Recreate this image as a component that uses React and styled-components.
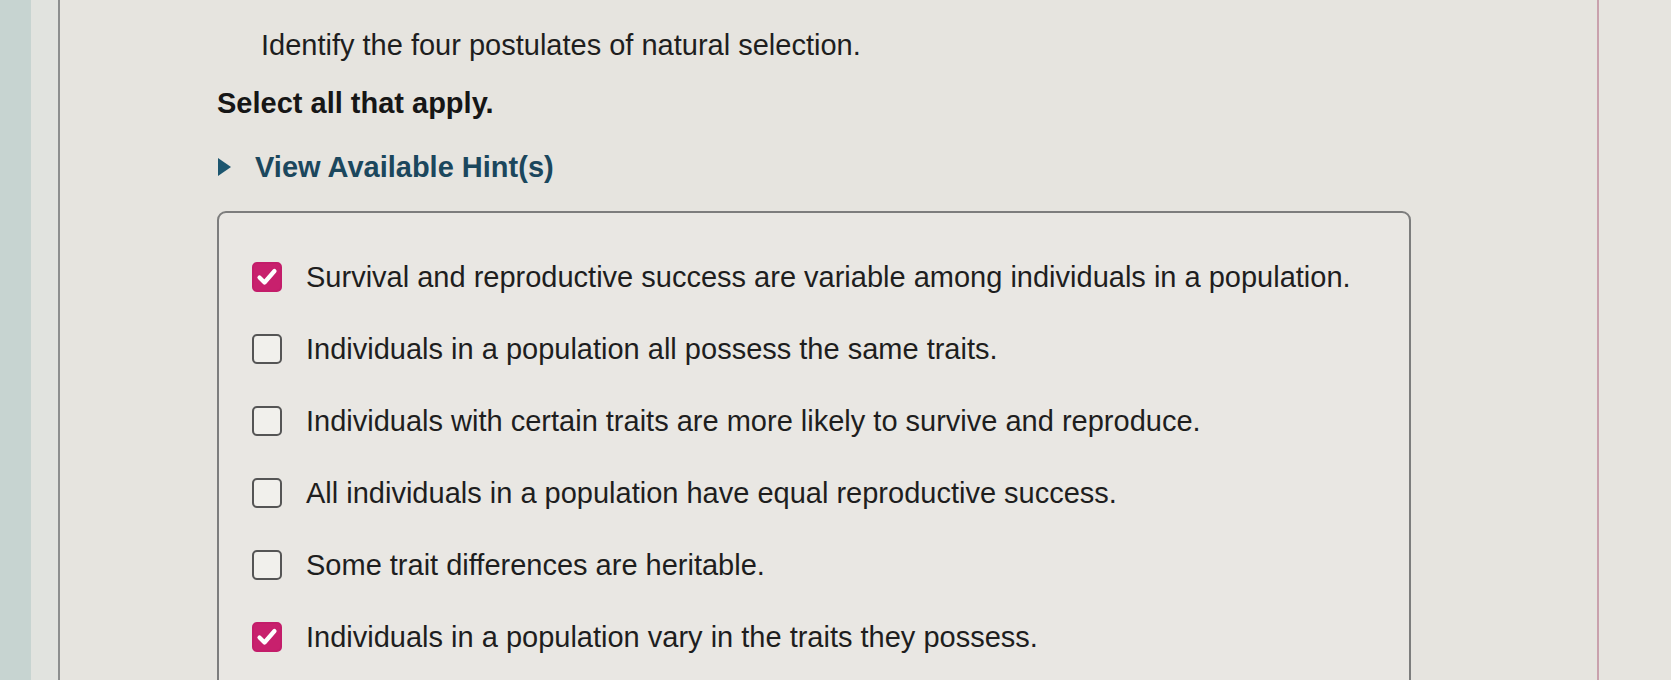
import React from 'react';
import styled, { createGlobalStyle } from 'styled-components';

const GlobalStyle = createGlobalStyle`
    html, body { margin: 0; padding: 0; }
    body {
        font-family: "Liberation Sans", Arial, sans-serif;
        background: #e6e4df;
        color: #1e1e1e;
    }
`

const Page = styled.div`
    display: flex;
    height: 680px;
    overflow: hidden;
    background: #e6e4df;
`

const Rail = styled.div`
    width: 31px;
    flex: none;
    background: #c7d4d1;
`

const Gutter = styled.div`
    width: 27px;
    flex: none;
    background: #e1e3df;
    border-right: 2px solid #8c8e8e;
`

const Main = styled.main`
    flex: 1;
    padding: 28px 0 0 157px;
`

const Margin = styled.div`
    width: 72px;
    flex: none;
    border-left: 2px solid #c9a1ad;
`

const Title = styled.p`
    margin: 0 0 0 44px;
    font-size: 29px;
    line-height: 34px;
`

const Instruction = styled.p`
    margin: 24px 0 0;
    font-size: 29px;
    line-height: 34px;
    font-weight: bold;
    color: #161616;
`

const Hint = styled.div`
    display: flex;
    align-items: center;
    gap: 24px;
    margin-top: 30px;
    font-size: 29px;
    line-height: 34px;
    font-weight: bold;
    color: #1b475d;
`

const Arrow = styled.span`
    width: 0;
    height: 0;
    margin-left: 1px;
    border-top: 9px solid transparent;
    border-bottom: 9px solid transparent;
    border-left: 13px solid #1d566f;
`

const Options = styled.div`
    margin-top: 27px;
    width: 1194px;
    height: 600px;
    box-sizing: border-box;
    border: 2px solid #7d7d7d;
    border-radius: 9px;
    background: #e9e7e3;
    padding: 28px 0 0 33px;
`

const Row = styled.label`
    display: flex;
    align-items: center;
    gap: 24px;
    height: 72px;
    font-size: 29px;
    color: #1e1e1e;
`

const Box = styled.span`
    width: 30px;
    height: 30px;
    flex: none;
    box-sizing: border-box;
    border-radius: 5px;
    display: flex;
    align-items: center;
    justify-content: center;
    border: 2px solid ${({ checked }) => (checked ? '#c31d6a' : '#555')};
    background: ${({ checked }) => (checked ? '#c8206d' : '#f1f0ec')};
`

const options = [
    { text: 'Survival and reproductive success are variable among individuals in a population.', checked: true },
    { text: 'Individuals in a population all possess the same traits.', checked: false },
    { text: 'Individuals with certain traits are more likely to survive and reproduce.', checked: false },
    { text: 'All individuals in a population have equal reproductive success.', checked: false },
    { text: 'Some trait differences are heritable.', checked: false },
    { text: 'Individuals in a population vary in the traits they possess.', checked: true },
]

function Check() {
    return <svg width="24" height="24" viewBox="0 0 24 24">
        <path d="M4.5 12.5 L9.5 17.5 L19.5 6" fill="none" stroke="#fff" strokeWidth="4.2" strokeLinecap="round" strokeLinejoin="round" />
    </svg>
}

export default function App() {
    return <>
        <GlobalStyle />
        <Page>
            <Rail />
            <Gutter />
            <Main>
                <Title>Identify the four postulates of natural selection.</Title>
                <Instruction>Select all that apply.</Instruction>
                <Hint><Arrow />View Available Hint(s)</Hint>
                <Options>
                    {options.map(o => <Row key={o.text}>
                        <Box checked={o.checked}>{o.checked && <Check />}</Box>
                        {o.text}
                    </Row>)}
                </Options>
            </Main>
            <Margin />
        </Page>
    </>
}
